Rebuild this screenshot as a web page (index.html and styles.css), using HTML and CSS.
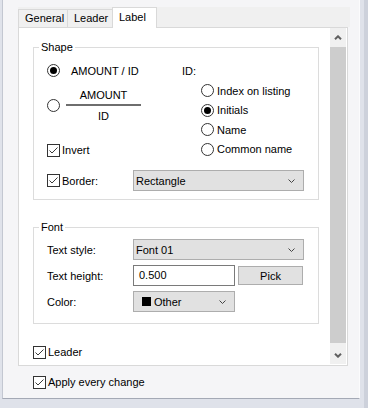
FILE: index.html
```html
<!DOCTYPE html>
<html>
<head>
<meta charset="utf-8">
<link rel="stylesheet" href="styles.css">
</head>
<body>
<div class="frame">
  <div class="tabs">
    <div class="tab tab-general">General</div>
    <div class="tab tab-leader">Leader</div>
    <div class="tab tab-active">Label</div>
  </div>
  <div class="panel">
    <div class="content">
      <div class="group shape">
        <div class="legend">Shape</div>
        <div class="cols">
          <div class="col-left">
            <div class="row h21">
              <span class="radio on"></span>
              <span class="opt-text">AMOUNT / ID</span>
            </div>
            <div class="row frac-row">
              <span class="radio"></span>
              <div class="frac">
                <div class="frac-top">AMOUNT</div>
                <div class="frac-line"></div>
                <div class="frac-bot">ID</div>
              </div>
            </div>
            <div class="row h20 invert-row">
              <span class="checkbox"><svg width="11" height="11" viewBox="0 0 11 11"><path d="M1.5 5.5 L4 8 L9.5 2.5" fill="none" stroke="#3a3a3a" stroke-width="1"/></svg></span>
              <span class="cb-text">Invert</span>
            </div>
          </div>
          <div class="col-right">
            <div class="row h21">ID:</div>
            <div class="row idopt"><span class="radio"></span><span class="id-text">Index on listing</span></div>
            <div class="row idopt"><span class="radio on"></span><span class="id-text">Initials</span></div>
            <div class="row idopt"><span class="radio"></span><span class="id-text">Name</span></div>
            <div class="row idopt"><span class="radio"></span><span class="id-text">Common name</span></div>
          </div>
        </div>
        <div class="row h21 border-row">
          <div class="field-label">
            <span class="checkbox"><svg width="11" height="11" viewBox="0 0 11 11"><path d="M1.5 5.5 L4 8 L9.5 2.5" fill="none" stroke="#3a3a3a" stroke-width="1"/></svg></span>
            <span class="cb-text">Border:</span>
          </div>
          <div class="select wide">
            <span>Rectangle</span>
            <svg class="chev" width="7" height="4" viewBox="0 0 7 4"><path d="M0.5 0.5 L3.5 3.5 L6.5 0.5" fill="none" stroke="#444" stroke-width="1"/></svg>
          </div>
        </div>
      </div>

      <div class="group font">
        <div class="legend">Font</div>
        <div class="row h21">
          <div class="field-label plain">Text style:</div>
          <div class="select wide">
            <span>Font 01</span>
            <svg class="chev" width="7" height="4" viewBox="0 0 7 4"><path d="M0.5 0.5 L3.5 3.5 L6.5 0.5" fill="none" stroke="#444" stroke-width="1"/></svg>
          </div>
        </div>
        <div class="row h21 gap5">
          <div class="field-label plain">Text height:</div>
          <div class="input">0.500</div>
          <div class="button">Pick</div>
        </div>
        <div class="row h21 gap5">
          <div class="field-label plain">Color:</div>
          <div class="select narrow">
            <span class="swatch"></span>
            <span class="swatch-text">Other</span>
            <svg class="chev" width="7" height="4" viewBox="0 0 7 4"><path d="M0.5 0.5 L3.5 3.5 L6.5 0.5" fill="none" stroke="#444" stroke-width="1"/></svg>
          </div>
        </div>
      </div>

      <div class="row h20 leader-row">
        <span class="checkbox"><svg width="11" height="11" viewBox="0 0 11 11"><path d="M1.5 5.5 L4 8 L9.5 2.5" fill="none" stroke="#3a3a3a" stroke-width="1"/></svg></span>
        <span class="cb-text">Leader</span>
      </div>
    </div>
    <div class="scroll">
      <div class="sb-btn sb-up"><svg width="8" height="5" viewBox="0 0 8 5"><path d="M1 4.3 L4 1.3 L7 4.3" fill="none" stroke="#606060" stroke-width="2"/></svg></div>
      <div class="sb-thumb"></div>
      <div class="sb-btn sb-down"><svg width="8" height="5" viewBox="0 0 8 5"><path d="M1 0.7 L4 3.7 L7 0.7" fill="none" stroke="#606060" stroke-width="2"/></svg></div>
    </div>
  </div>
  <div class="row h20 apply-row">
    <span class="checkbox"><svg width="11" height="11" viewBox="0 0 11 11"><path d="M1.5 5.5 L4 8 L9.5 2.5" fill="none" stroke="#3a3a3a" stroke-width="1"/></svg></span>
    <span class="cb-text apply-text">Apply every change</span>
  </div>
</div>
</body>
</html>
```

FILE: styles.css
```css
* { box-sizing: border-box; }
html, body { margin: 0; padding: 0; }
body {
  width: 368px;
  height: 408px;
  overflow: hidden;
  background: linear-gradient(to right, #dfe2ea 0, #dfe2ea 364px, #cdd1db 364px);
  font-family: "Liberation Sans", Arial, sans-serif;
  font-size: 11px;
  color: #000;
}
.frame {
  margin-left: 2px;
  width: 358px;
  height: 399px;
  border-left: 1px solid #c3c7d1;
  border-right: 1px solid #fbfbfc;
  border-bottom: 1px solid #a4a9b5;
  background: #f5f5f7;
  padding: 7px 0 0 15px;
  display: flex;
  flex-direction: column;
}
.tabs {
  display: flex;
  align-items: flex-end;
  width: 332px;
  height: 20px;
  background: #f0f0f0;
}
.tab {
  height: 18px;
  border: 1px solid #d9d9d9;
  border-bottom: none;
  border-right: none;
  padding-left: 6px;
  line-height: 17px;
  background: #f0f0f0;
}
.tab-general { width: 49px; }
.tab-leader { width: 45px; }
.tab-active {
  width: 45px;
  height: 21px;
  margin-bottom: -1px;
  background: #fff;
  border-right: 1px solid #d9d9d9;
  line-height: 18px;
  position: relative;
  z-index: 1;
}
.panel {
  width: 330px;
  height: 339px;
  border: 1px solid #d9d9d9;
  background: #fff;
  display: flex;
}
.content {
  width: 311px;
  padding-left: 14px;
  display: flex;
  flex-direction: column;
}
.group {
  position: relative;
  width: 286px;
  border: 1px solid #dcdcdc;
}
.shape {
  margin-top: 19px;
  padding: 12px 0 8px 13px;
}
.font {
  margin-top: 27px;
  padding: 11px 0 11px 13px;
}
.legend {
  position: absolute;
  top: -7px;
  left: 5px;
  padding: 0 2px;
  line-height: 13px;
  background: #fff;
}
.row { display: flex; align-items: center; }
.h21 { height: 21px; }
.h20 { height: 20px; }
.gap5 { margin-top: 5px; }
.cols { display: flex; }
.col-left { width: 135px; display: flex; flex-direction: column; }
.col-right { display: flex; flex-direction: column; }
.radio {
  flex: none;
  width: 13px;
  height: 13px;
  border: 1px solid #333;
  border-radius: 50%;
  background: #fff;
  display: flex;
  align-items: center;
  justify-content: center;
}
.radio.on::after {
  content: "";
  width: 7px;
  height: 7px;
  border-radius: 50%;
  background: #000;
}
.checkbox {
  flex: none;
  width: 13px;
  height: 13px;
  border: 1px solid #333;
  background: #fff;
  display: block;
}
.checkbox svg { display: block; }
.opt-text { margin-left: 11px; }
.frac-row { margin-top: 7px; height: 35px; }
.frac {
  margin-left: 6px;
  width: 75px;
  display: flex;
  flex-direction: column;
  align-items: center;
}
.frac-top { line-height: 14px; }
.frac-line { width: 75px; height: 2px; margin-top: 2px; background: #6e6e6e; }
.frac-bot { margin-top: 4px; line-height: 13px; }
.invert-row { margin-top: 17px; }
.cb-text { margin-left: 2px; }
.idopt { height: 19.5px; padding-left: 19px; }
.id-text { margin-left: 3px; }
.border-row { margin-top: 10px; }
.field-label { width: 86px; display: flex; align-items: center; flex: none; }
.select {
  height: 21px;
  border: 1px solid #adadad;
  background: #e1e1e1;
  display: flex;
  align-items: center;
  padding-left: 2px;
}
.select.wide { width: 171px; }
.select.narrow { width: 102px; }
.chev { margin-left: auto; margin-right: 8px; flex: none; }
.input {
  width: 102px;
  height: 21px;
  border: 1px solid #7a7a7a;
  background: #fff;
  padding-left: 5px;
  line-height: 19px;
}
.button {
  margin-left: 3px;
  width: 65px;
  height: 19px;
  border: 1px solid #adadad;
  background: #e1e1e1;
  display: flex;
  align-items: center;
  justify-content: center;
}
.swatch {
  width: 9px;
  height: 9px;
  background: #000;
  margin-left: 6px;
  flex: none;
}
.swatch-text { margin-left: 3px; }
.leader-row { margin-top: 18px; }
.scroll {
  width: 16px;
  margin-bottom: 1px;
  background: #f0f0f0;
  display: flex;
  flex-direction: column;
}
.sb-btn { flex: none; display: flex; align-items: center; justify-content: center; }
.sb-up { height: 19px; }
.sb-down { height: 17px; }
.sb-thumb { flex: 1; background: #cdcdcd; margin-bottom: 4px; }
.sb-btn svg { display: block; }
.apply-row { margin-top: 6px; margin-left: 15px; }
.apply-text { margin-left: 2px; }
```
